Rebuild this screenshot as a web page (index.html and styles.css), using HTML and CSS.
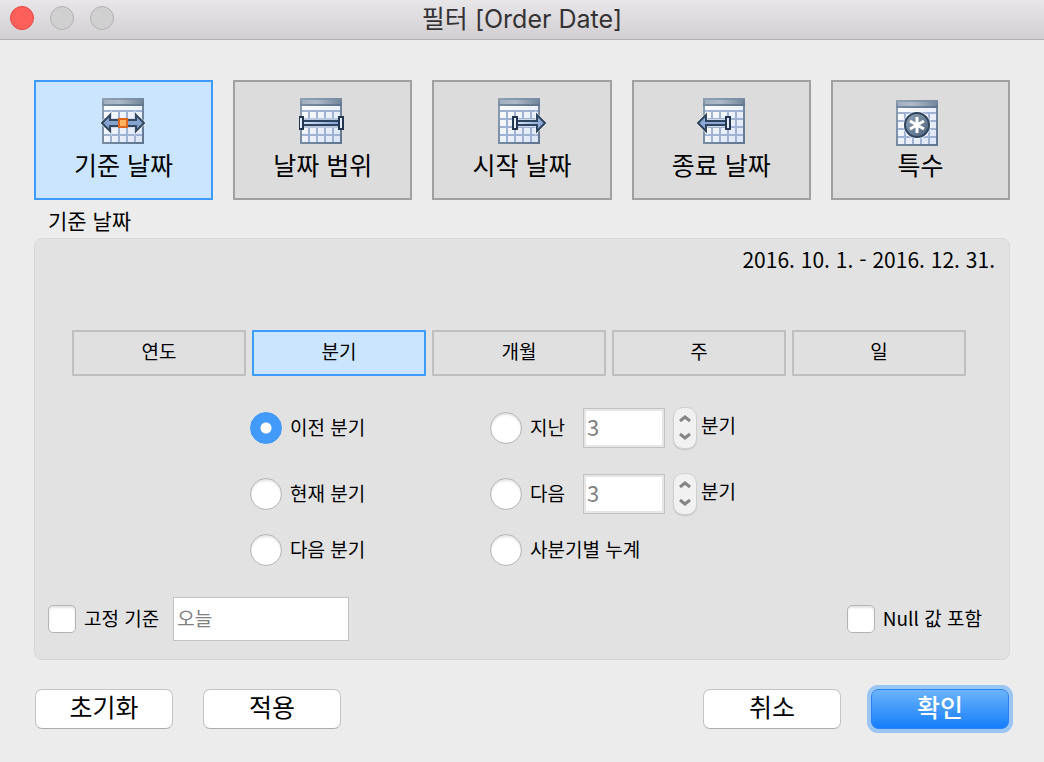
FILE: index.html
```html
<!DOCTYPE html>
<html lang="ko">
<head>
<meta charset="UTF-8">
<meta name="viewport" content="width=device-width, initial-scale=1.0">
<title>필터 [Order Date]</title>
<link rel="stylesheet" href="styles.css">
</head>
<body>
<svg class="defs" width="0" height="0" aria-hidden="true">
  <defs>
    <linearGradient id="frame" x1="0" y1="0" x2="1" y2="1">
      <stop offset="0" stop-color="#8fa1b3"/>
      <stop offset="1" stop-color="#60758f"/>
    </linearGradient>
    <linearGradient id="head" x1="0" y1="0" x2="1" y2="0">
      <stop offset="0" stop-color="#a0aebd"/>
      <stop offset="0.4" stop-color="#aebaca"/>
      <stop offset="1" stop-color="#72869a"/>
    </linearGradient>
    <linearGradient id="paper" x1="0" y1="0" x2="1" y2="1">
      <stop offset="0" stop-color="#ffffff"/>
      <stop offset="1" stop-color="#dbe5f7"/>
    </linearGradient>
    <linearGradient id="blue" x1="0" y1="0" x2="1" y2="0">
      <stop offset="0" stop-color="#d8e4f8"/>
      <stop offset="1" stop-color="#7f9fd4"/>
    </linearGradient>
    <linearGradient id="disc" x1="0" y1="0" x2="1" y2="1">
      <stop offset="0" stop-color="#93a5b8"/>
      <stop offset="1" stop-color="#4c637c"/>
    </linearGradient>
    <symbol id="calendar" viewBox="0 0 42 46">
      <rect x="1" y="1" width="40" height="44" fill="url(#paper)" stroke="url(#frame)" stroke-width="2"/>
      <path d="M2 13h38M2 21h38M2 29h38M2 37h38M9 14v30M17 14v30M25 14v30M33 14v30" stroke="#9fb2d3" stroke-width="2"/>
      <rect x="1" y="1" width="40" height="6" fill="url(#head)" stroke="url(#frame)" stroke-width="2"/>
    </symbol>
  </defs>
</svg>

<header class="titlebar">
  <div class="lights">
    <button class="light close" aria-label="닫기"></button>
    <button class="light" aria-label="최소화"></button>
    <button class="light" aria-label="확대"></button>
  </div>
  <h1>필터 [Order Date]</h1>
</header>

<main>
  <nav class="modes">
    <button class="mode active">
      <svg class="icon" viewBox="0 0 48 48">
        <use href="#calendar" x="2" y="0" width="42" height="46"/>
        <path d="M2 25L10 17v5h26v-5l8 8-8 8v-5H10v5z" fill="none" stroke="#fff" stroke-opacity=".5" stroke-width="4"/>
        <path d="M2 25L10 17v5h26v-5l8 8-8 8v-5H10v5z" fill="#86a2d0" stroke="#34495f" stroke-width="2"/>
        <rect x="19" y="21" width="8" height="8" fill="#ffb45c" stroke="#e0661a" stroke-width="2"/>
      </svg>
      <span>기준 날짜</span>
    </button>
    <button class="mode">
      <svg class="icon" viewBox="0 0 48 48">
        <use href="#calendar" x="1" y="0" width="42" height="46"/>
        <path d="M4 21h36M4 29h36" stroke="#b9c8df" stroke-width="2"/>
        <rect x="4" y="23" width="36" height="4" fill="url(#blue)" stroke="#2f455f" stroke-width="2"/>
        <rect x="0" y="19" width="4" height="12" fill="#e4ecfa" stroke="#22374f" stroke-width="2"/>
        <rect x="40" y="19" width="4" height="12" fill="#e4ecfa" stroke="#22374f" stroke-width="2"/>
      </svg>
      <span>날짜 범위</span>
    </button>
    <button class="mode">
      <svg class="icon" viewBox="0 0 48 48">
        <use href="#calendar" x="0" y="0" width="42" height="46"/>
        <path d="M19 23h20v-6l8 8-8 8v-6H19z" fill="none" stroke="#fff" stroke-opacity=".5" stroke-width="4"/>
        <path d="M19 23h20v-6l8 8-8 8v-6H19z" fill="url(#blue)" stroke="#2f455f" stroke-width="2"/>
        <rect x="15" y="19" width="4" height="12" fill="#e4ecfa" stroke="#22374f" stroke-width="2"/>
      </svg>
      <span>시작 날짜</span>
    </button>
    <button class="mode">
      <svg class="icon" viewBox="0 0 48 48">
        <use href="#calendar" x="6" y="0" width="42" height="46"/>
        <path d="M29 23H9v-6l-8 8 8 8v-6h20z" fill="none" stroke="#fff" stroke-opacity=".5" stroke-width="4"/>
        <path d="M29 23H9v-6l-8 8 8 8v-6h20z" fill="#8ba8d8" stroke="#2f455f" stroke-width="2"/>
        <rect x="29" y="19" width="4" height="12" fill="#e4ecfa" stroke="#22374f" stroke-width="2"/>
      </svg>
      <span>종료 날짜</span>
    </button>
    <button class="mode">
      <svg class="icon" viewBox="0 0 48 48">
        <use href="#calendar" x="0" y="2" width="42" height="46"/>
        <circle cx="21" cy="27" r="14" fill="#fff" fill-opacity=".5"/>
        <circle cx="21" cy="27" r="12" fill="url(#disc)" stroke="#30455d" stroke-width="2"/>
        <path d="M21 19v16M14 23l14 8M28 23l-14 8" stroke="#fff" stroke-width="3"/>
      </svg>
      <span>특수</span>
    </button>
  </nav>

  <h2>기준 날짜</h2>
  <section class="panel">
    <p class="range">2016. 10. 1. - 2016. 12. 31.</p>

    <div class="periods">
      <button class="period">연도</button>
      <button class="period active">분기</button>
      <button class="period">개월</button>
      <button class="period">주</button>
      <button class="period">일</button>
    </div>

    <div class="options">
      <label class="option"><input type="radio" name="quarter" checked><span>이전 분기</span></label>
      <div class="option">
        <label class="option" for="last"><input type="radio" name="quarter" id="last"><span>지난</span></label>
        <input class="count" type="text" value="3" aria-label="지난 분기 수">
        <div class="stepper">
          <button aria-label="증가"><svg viewBox="0 0 12 8"><path d="M1 6l5-4 5 4"/></svg></button>
          <button aria-label="감소"><svg viewBox="0 0 12 8"><path d="M1 2l5 4 5-4"/></svg></button>
        </div>
        <div class="unit">분기</div>
      </div>
      <label class="option"><input type="radio" name="quarter"><span>현재 분기</span></label>
      <div class="option">
        <label class="option" for="next"><input type="radio" name="quarter" id="next"><span>다음</span></label>
        <input class="count" type="text" value="3" aria-label="다음 분기 수">
        <div class="stepper">
          <button aria-label="증가"><svg viewBox="0 0 12 8"><path d="M1 6l5-4 5 4"/></svg></button>
          <button aria-label="감소"><svg viewBox="0 0 12 8"><path d="M1 2l5 4 5-4"/></svg></button>
        </div>
        <div class="unit">분기</div>
      </div>
      <label class="option"><input type="radio" name="quarter"><span>다음 분기</span></label>
      <label class="option"><input type="radio" name="quarter"><span>사분기별 누계</span></label>
    </div>

    <div class="anchor">
      <label class="option"><input type="checkbox"><span>고정 기준</span></label>
      <input class="day" type="text" value="오늘" aria-label="기준 날짜">
      <label class="option nulls"><input type="checkbox"><span>Null 값 포함</span></label>
    </div>
  </section>

  <footer>
    <button class="button">초기화</button>
    <button class="button">적용</button>
    <button class="button cancel">취소</button>
    <button class="button primary">확인</button>
  </footer>
</main>
</body>
</html>
```
FILE: styles.css
```css
* {
  box-sizing: border-box;
}
body {
  margin: 0;
  background-color: #ececec;
  color: #000;
  font-family: "Noto Sans CJK KR", sans-serif;
  font-size: 19px;
  line-height: 28px;
}
button, input {
  margin: 0;
  padding: 0;
  font-family: inherit;
  color: inherit;
}
.defs {
  position: absolute;
}
.titlebar {
  display: grid;
  grid-template-columns: 1fr auto 1fr;
  align-items: center;
  height: 40px;
  padding: 0 10px;
  background: linear-gradient(#e8e6e8, #d1cfd1);
  border-bottom: 1px solid #b0aeb0;
}
.lights {
  display: flex;
  gap: 16px;
  padding-bottom: 4px;
}
.light {
  width: 24px;
  height: 24px;
  border: 1px solid #b3b1b3;
  border-radius: 50%;
  background-color: #d0d0d0;
}
.light.close {
  border-color: #e2463f;
  background-color: #fd605b;
}
h1 {
  margin: 0;
  padding-bottom: 2px;
  font-family: Inter, "Noto Sans CJK KR", sans-serif;
  font-size: 25px;
  font-weight: 400;
  line-height: 36px;
  color: #343234;
}
main {
  padding: 40px 34px 30px;
}
.modes {
  display: grid;
  grid-template-columns: repeat(5, 1fr);
  gap: 20px;
}
.mode {
  display: flex;
  flex-direction: column;
  align-items: center;
  height: 120px;
  padding-top: 16px;
  border: 2px solid #a0a0a0;
  background-color: #dcdcdc;
  font-size: 25px;
  line-height: 36px;
}
.icon {
  width: 48px;
  height: 48px;
}
.mode.active, .period.active {
  border-color: #3d9bfc;
  background-color: #cbe5ff;
}
h2 {
  margin: 4px 0 2px 14px;
  font-size: 21px;
  font-weight: 400;
  line-height: 32px;
}
.panel {
  padding: 4px 14px 18px 13px;
  border: 1px solid #d8d8d8;
  border-radius: 8px;
  background-color: #e2e2e2;
}
.range {
  margin: 0;
  font-size: 21px;
  line-height: 32px;
  text-align: right;
}
.periods {
  display: grid;
  grid-template-columns: repeat(5, 1fr);
  gap: 6px;
  margin: 55px 29px 0 24px;
}
.period {
  height: 46px;
  padding-bottom: 6px;
  border: 2px solid #bfbfbf;
  border-radius: 1px;
  background-color: #e0e0e0;
  font-size: 19px;
}
.options {
  display: grid;
  grid-template-columns: 240px 1fr;
  grid-template-rows: 66px 66px 46px;
  align-items: center;
  margin: 19px 0 0 202px;
}
.option {
  display: flex;
  align-items: center;
}
.option span {
  padding-bottom: 2px;
}
input[type="radio"], input[type="checkbox"] {
  appearance: none;
  flex: none;
  width: 32px;
  height: 32px;
  margin-right: 8px;
  border: 1px solid #b4b4b4;
  border-radius: 50%;
  background-color: #fff;
  box-shadow: inset 0 2px 2px #e4e4e4;
}
input[type="radio"]:checked {
  border-color: #3f98f7;
  background: radial-gradient(circle, #fff 5px, #429bfa 6px);
  box-shadow: none;
}
input[type="checkbox"] {
  width: 28px;
  height: 28px;
  border-radius: 5px;
}
.count, .day {
  padding: 0 3px 4px;
  border: 1px solid #c3c3c3;
  background-color: #fff;
  color: #808080;
}
.count {
  width: 82px;
  height: 40px;
  margin: 0 8px 0 18px;
  box-shadow: inset 0 0 0 2px #e6e6e6;
  font-size: 22px;
}
.stepper {
  display: flex;
  flex-direction: column;
  width: 24px;
  height: 42px;
  padding: 2px 0 4px;
  border: 1px solid #d0d0d0;
  border-radius: 10px;
  background-color: #f1f1f1;
  box-shadow: 0 1px 1px #c4c4c4;
}
.stepper button {
  display: flex;
  flex: 1;
  align-items: center;
  justify-content: center;
  border: none;
  background: none;
}
.stepper svg {
  width: 12px;
  height: 8px;
  fill: none;
  stroke: #858585;
  stroke-width: 3;
}
.unit {
  padding: 0 0 6px 4px;
}
.anchor {
  display: flex;
  align-items: center;
  margin-top: 24px;
}
.day {
  width: 176px;
  height: 44px;
  margin-left: 14px;
  font-size: 19px;
}
.nulls {
  margin-left: auto;
  padding-right: 13px;
}
footer {
  display: flex;
  gap: 30px;
  margin-top: 29px;
  padding: 0 1px;
}
.button {
  width: 138px;
  height: 40px;
  padding-bottom: 6px;
  border: 1px solid #c4c4c4;
  border-bottom-color: #adadad;
  border-radius: 7px;
  background-color: #fff;
  font-size: 25px;
  line-height: 32px;
}
.cancel {
  margin-left: auto;
}
.primary {
  border-color: #2b83f0;
  background: linear-gradient(#6bb3fa, #157efb);
  box-shadow: 0 0 0 4px #9ac6f5;
  color: #fff;
  font-weight: 500;
}
```
